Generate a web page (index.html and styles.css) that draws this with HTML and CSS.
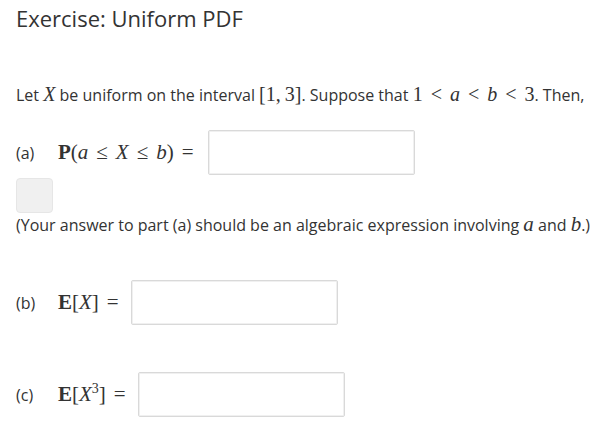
FILE: index.html
```html
<!DOCTYPE html>
<html lang="en">

<head>
    <meta charset="UTF-8">
    <meta name="viewport" content="width=device-width, initial-scale=1.0">
    <title>Exercise: Uniform PDF</title>
    <link rel="stylesheet" href="styles.css">
</head>

<body>
    <div class="exercise">
        <h2 class="exercise-title">Exercise: Uniform PDF</h2>

        <p class="intro">
            Let <span class="math"><i>X</i></span> be uniform on the interval
            <span class="math">[1,<span class="sep"></span>3]</span>. Suppose that
            <span class="math">1<span class="rel">&lt;</span><i>a</i><span class="rel">&lt;</span><i>b</i><span class="rel">&lt;</span>3</span>. Then,
        </p>

        <div class="part part-a">
            <span class="part-label">(a)</span>
            <span class="math formula"><b>P</b>(<i>a</i><span class="rel">&le;</span><i>X</i><span class="rel">&le;</span><i>b</i>)<span class="rel">=</span></span>
            <input type="text" class="answer-input">
        </div>

        <button class="check-button" type="button"></button>

        <p class="hint">
            (Your answer to part (a) should be an algebraic expression involving
            <span class="math"><i>a</i></span> and <span class="math"><i>b</i></span>.)
        </p>

        <div class="part part-b">
            <span class="part-label">(b)</span>
            <span class="math formula"><b>E</b>[<i>X</i>]<span class="rel">=</span></span>
            <input type="text" class="answer-input">
        </div>

        <div class="part part-c">
            <span class="part-label">(c)</span>
            <span class="math formula"><b>E</b>[<i>X</i><sup>3</sup>]<span class="rel">=</span></span>
            <input type="text" class="answer-input">
        </div>
    </div>
</body>

</html>
```

FILE: styles.css
```css
* {
    margin: 0;
    padding: 0;
    box-sizing: border-box;
}

body {
    font-family: 'Open Sans', 'Liberation Sans', sans-serif;
    background: white;
    color: #333;
}

.exercise {
    padding: 4px 16px 0 16px;
    display: flex;
    flex-direction: column;
    align-items: flex-start;
}

.exercise-title {
    font-size: 22px;
    font-weight: normal;
    color: #333;
    line-height: 28px;
}

.intro {
    margin-top: 51px;
    font-size: 16px;
    line-height: 24px;
}

.math {
    font-family: 'Liberation Serif', 'DejaVu Serif', serif;
    font-size: 21px;
    line-height: 1;
}

.intro .math {
    font-size: 20px;
}

.math i {
    font-style: italic;
}

.math b {
    font-weight: bold;
}

.math sup {
    font-size: 14px;
    vertical-align: 8px;
    line-height: 0;
}

.rel {
    display: inline-block;
    margin: 0 8px;
}

.sep {
    display: inline-block;
    width: 4px;
}

.part {
    display: flex;
    align-items: center;
}

.part-a {
    margin-top: 23px;
}

.part-b {
    margin-top: 43px;
}

.part-c {
    margin-top: 47px;
}

.part-label {
    font-size: 16px;
    width: 42px;
}

.formula {
    margin-right: 4px;
}

.part-a .formula {
    margin-right: 6px;
}

.answer-input {
    width: 207px;
    height: 45px;
    border: 1px solid #d9d9d9;
    box-shadow: inset 0 0 0 1px #f0f0f0;
    border-radius: 2px;
    outline: none;
    background: white;
}

.check-button {
    margin-top: 3px;
    width: 37px;
    height: 35px;
    background: #f0f0f0;
    border: 1px solid #e6e6e6;
    border-radius: 4px;
}

.hint {
    font-size: 16px;
    line-height: 24px;
}
```
